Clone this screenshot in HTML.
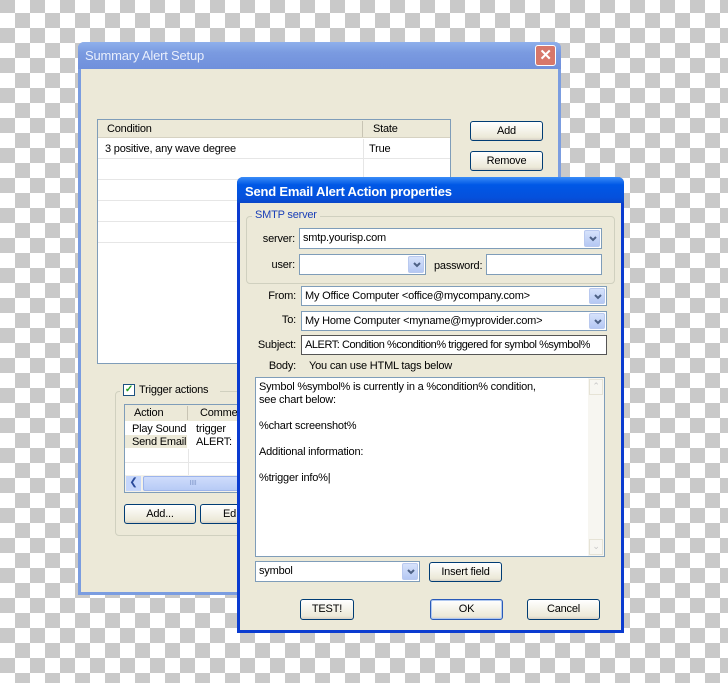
<!DOCTYPE html>
<html><head><style>
*{box-sizing:border-box}
body{margin:0;width:728px;height:683px;overflow:hidden;position:relative;font-family:"Liberation Sans",sans-serif;font-size:11px;letter-spacing:-0.2px;color:#000;
background-color:#fff;
background-image:linear-gradient(45deg,#c9c9c9 25%,transparent 25%,transparent 75%,#c9c9c9 75%),linear-gradient(45deg,#c9c9c9 25%,transparent 25%,transparent 75%,#c9c9c9 75%);
background-size:30px 30px;background-position:15px -2px,0 13px;}
.a{position:absolute}
.win{position:absolute;background:#ece9d8;border:3px solid #0a3bd0;border-top:none;border-radius:6px 6px 0 0}
.tb{position:absolute;left:-3px;right:-3px;top:0;height:26px;border-radius:6px 6px 0 0;color:#fff;font-size:13px;padding:6px 0 0 7px}
.btn{position:absolute;border:1px solid #003c74;border-radius:3px;background:linear-gradient(#fff,#ece9d8 85%,#d6d0c5);text-align:center;font-size:11px;line-height:18px}
.in{position:absolute;background:#fff;border:1px solid #7f9db9;padding:3px 3px;font-size:11px;line-height:13px;white-space:nowrap;overflow:hidden}
.dd{position:absolute;right:1px;top:1px;bottom:1px;width:16px;background:linear-gradient(#d6e2fb,#b5c8f3);border:1px solid #b9c9ef;border-radius:2px}
.dd svg{position:absolute;left:4px;top:5px}
.lbl{position:absolute;text-align:right;font-size:11px}
</style></head><body>

<div class="win" style="left:78px;top:42px;width:483px;height:553px;border-color:#7b9de0;background:#ece9d8">
 <div class="tb" style="background:linear-gradient(#8fb0ec,#7a9ae0 40%,#7090dc);height:27px;color:#e8eefc">Summary Alert Setup</div>
 <div class="a" style="right:2px;top:3px;width:21px;height:21px;background:#d7776a;border:1px solid #fff;border-radius:3px;color:#fff;font-size:15px;text-align:center;line-height:19px;font-weight:bold">✕</div>
</div>
<div class="a" style="left:97px;top:119px;width:354px;height:245px;background:#fff;border:1px solid #7f9db9">
 <div class="a" style="left:0;top:0;right:0;height:18px;background:#ece9d8;border-bottom:1px solid #d6d2c2"></div>
 <div class="a" style="left:9px;top:3px">Condition</div>
 <div class="a" style="left:264px;top:1px;width:1px;height:16px;background:#c8c4b4"></div>
 <div class="a" style="left:275px;top:3px">State</div>
 <div class="a" style="left:7px;top:23px">3 positive, any wave degree</div>
 <div class="a" style="left:271px;top:23px">True</div>
 <div class="a" style="left:265px;top:19px;width:1px;height:105px;background:#e6e6e6"></div>
 <div class="a" style="left:0;right:0;top:38px;height:1px;background:#e6e6e6"></div>
 <div class="a" style="left:0;right:0;top:59px;height:1px;background:#e6e6e6"></div>
 <div class="a" style="left:0;right:0;top:80px;height:1px;background:#e6e6e6"></div>
 <div class="a" style="left:0;right:0;top:101px;height:1px;background:#e6e6e6"></div>
 <div class="a" style="left:0;right:0;top:122px;height:1px;background:#e6e6e6"></div>
</div>
<div class="btn" style="left:470px;top:121px;width:73px;height:20px">Add</div>
<div class="btn" style="left:470px;top:151px;width:73px;height:20px">Remove</div>

<div class="a" style="left:115px;top:391px;width:140px;height:145px;border:1px solid #d0d0bf;border-radius:4px"></div>
<div class="a" style="left:120px;top:383px;width:100px;height:14px;background:#ece9d8"></div>
<div class="a" style="left:123px;top:384px;width:12px;height:12px;background:#fff;border:1px solid #1c5180;color:#21a121;font-size:10px;line-height:10px;text-align:center;font-weight:bold">✓</div>
<div class="a" style="left:139px;top:384px">Trigger actions</div>
<div class="a" style="left:124px;top:404px;width:120px;height:89px;background:#fff;border:1px solid #7f9db9">
 <div class="a" style="left:0;top:0;right:0;height:16px;background:#ece9d8"></div>
 <div class="a" style="left:9px;top:2px">Action</div>
 <div class="a" style="left:62px;top:1px;width:1px;height:14px;background:#c8c4b4"></div>
 <div class="a" style="left:75px;top:2px">Commen</div>
 <div class="a" style="left:7px;top:18px">Play Sound</div>
 <div class="a" style="left:71px;top:18px">trigger</div>
 <div class="a" style="left:0;top:30px;width:62px;height:13px;background:#ece9d8"></div>
 <div class="a" style="left:7px;top:31px">Send Email</div>
 <div class="a" style="left:71px;top:31px">ALERT:</div>
 <div class="a" style="left:63px;top:44px;width:1px;height:27px;background:#e6e6e6"></div>
 <div class="a" style="left:0;right:0;top:57px;height:1px;background:#e6e6e6"></div>
 <div class="a" style="left:0;right:0;bottom:0;height:17px;background:#f3f1e9">
  <div class="a" style="left:1px;top:1px;width:15px;height:15px;background:#c5d6fb;color:#2a4a9a;font-size:10px;text-align:center;line-height:14px">❮</div>
  <div class="a" style="left:18px;top:1px;right:0;height:15px;background:linear-gradient(#cfdcfb,#b7cbf6);border:1px solid #9cb4ec;border-radius:2px;text-align:center;font-size:7px;color:#7f96c8;line-height:13px">IIII</div>
 </div>
</div>
<div class="btn" style="left:124px;top:504px;width:72px;height:20px">Add...</div>
<div class="btn" style="left:200px;top:504px;width:50px;height:20px;text-align:left;padding-left:22px">Ed</div>

<div class="win" style="left:237px;top:177px;width:387px;height:456px">
 <div class="tb" style="background:linear-gradient(#3a8cf7,#0058e6 30%,#0550dc 80%,#0a46c8);font-weight:bold;font-size:13px;padding-top:7px;padding-left:8px">Send Email Alert Action properties</div>
</div>
<div class="a" style="left:246px;top:216px;width:369px;height:68px;border:1px solid #d0d0bf;border-radius:4px"></div>
<div class="a" style="left:252px;top:209px;background:#ece9d8;padding:0 3px;color:#1a3fb8">SMTP server</div>
<div class="lbl" style="left:245px;width:50px;top:233px">server:</div>
<div class="in" style="left:299px;top:228px;width:303px;height:21px">smtp.yourisp.com<div class="dd"><svg width="8" height="6"><path d="M1 1 L4 4 L7 1" stroke="#4d6185" stroke-width="2" fill="none"/></svg></div></div>
<div class="lbl" style="left:245px;width:50px;top:259px">user:</div>
<div class="in" style="left:299px;top:254px;width:127px;height:21px"><div class="dd"><svg width="8" height="6"><path d="M1 1 L4 4 L7 1" stroke="#4d6185" stroke-width="2" fill="none"/></svg></div></div>
<div class="a" style="left:434px;top:260px">password:</div>
<div class="in" style="left:486px;top:254px;width:116px;height:21px"></div>
<div class="lbl" style="left:245px;width:51px;top:290px">From:</div>
<div class="in" style="left:301px;top:286px;width:306px;height:20px">My Office Computer &lt;office@mycompany.com&gt;<div class="dd"><svg width="8" height="6"><path d="M1 1 L4 4 L7 1" stroke="#4d6185" stroke-width="2" fill="none"/></svg></div></div>
<div class="lbl" style="left:245px;width:51px;top:314px">To:</div>
<div class="in" style="left:301px;top:311px;width:306px;height:20px">My Home Computer &lt;myname@myprovider.com&gt;<div class="dd"><svg width="8" height="6"><path d="M1 1 L4 4 L7 1" stroke="#4d6185" stroke-width="2" fill="none"/></svg></div></div>
<div class="lbl" style="left:245px;width:51px;top:339px">Subject:</div>
<div class="in" style="left:301px;top:335px;width:306px;height:20px;border-color:#555;letter-spacing:-0.45px">ALERT: Condition %condition% triggered for symbol %symbol%</div>
<div class="lbl" style="left:245px;width:51px;top:360px">Body:</div>
<div class="a" style="left:309px;top:360px">You can use HTML tags below</div>
<div class="a" style="left:255px;top:377px;width:350px;height:180px;background:#fff;border:1px solid #7f9db9;padding:3px 3px;line-height:13px">
 Symbol %symbol% is currently in a %condition% condition,<br>see chart below:<br><br>%chart screenshot%<br><br>Additional information:<br><br>%trigger info%|
 <div class="a" style="right:0;top:0;bottom:0;width:16px;background:#f7f6f1">
  <div class="a" style="left:1px;top:1px;width:14px;height:16px;border:1px solid #e6e3d6;color:#c8c8c8;font-size:9px;text-align:center">⌃</div>
  <div class="a" style="left:1px;bottom:1px;width:14px;height:16px;border:1px solid #e6e3d6;color:#c8c8c8;font-size:9px;text-align:center">⌄</div>
 </div>
</div>
<div class="in" style="left:255px;top:561px;width:165px;height:21px">symbol<div class="dd"><svg width="8" height="6"><path d="M1 1 L4 4 L7 1" stroke="#4d6185" stroke-width="2" fill="none"/></svg></div></div>
<div class="btn" style="left:429px;top:562px;width:73px;height:20px">Insert field</div>
<div class="btn" style="left:300px;top:599px;width:54px;height:21px">TEST!</div>
<div class="btn" style="left:430px;top:599px;width:73px;height:21px;border-color:#2a5ab8;box-shadow:inset 0 0 0 1px #b0c8f0">OK</div>
<div class="btn" style="left:527px;top:599px;width:73px;height:21px">Cancel</div>
</body></html>
